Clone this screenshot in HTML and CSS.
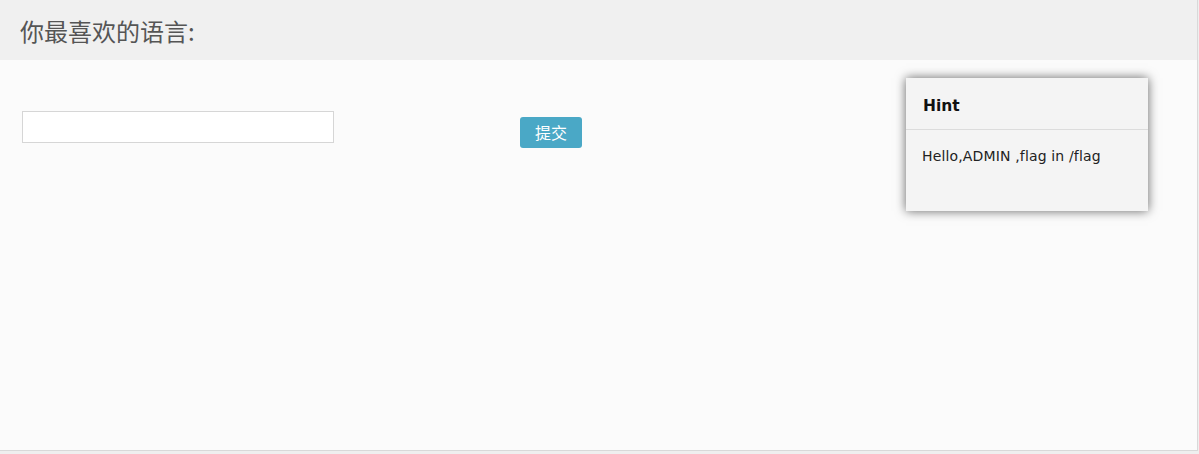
FILE: index.html
```html
<!DOCTYPE html>
<html lang="zh">
<head>
<meta charset="utf-8">
<title>你最喜欢的语言</title>
<link rel="stylesheet" href="styles.css">
</head>
<body>
<div class="page">
  <header class="top">
    <h1 class="title">你最喜欢的语言:</h1>
  </header>
  <main class="main">
    <form class="form">
      <input class="field" type="text">
      <button class="submit" type="button">提交</button>
    </form>
    <aside class="hint">
      <div class="hint-head">Hint</div>
      <div class="hint-body">Hello,ADMIN ,flag in /flag</div>
    </aside>
  </main>
</div>
</body>
</html>
```

FILE: styles.css
```css
html, body {
  margin: 0;
  padding: 0;
}
body {
  background: #efefef;
  font-family: "DejaVu Sans", Verdana, sans-serif;
  height: 454px;
  overflow: hidden;
}
.page {
  width: 1197px;
  height: 450px;
  border-right: 1px solid #d9d9d9;
  border-bottom: 1px solid #d9d9d9;
  background: #fbfbfb;
  display: flex;
  flex-direction: column;
}
.top {
  height: 60px;
  background: #f0f0f0;
  display: flex;
  align-items: center;
  padding-left: 20px;
}
.title {
  margin: 0;
  font-family: "Noto Sans CJK SC", "Microsoft YaHei", sans-serif;
  font-weight: 400;
  font-size: 24px;
  color: #555;
  line-height: 1;
  margin-top: 2px;
}
.main {
  position: relative;
  flex: 1;
}
.form {
  display: flex;
  align-items: flex-start;
  padding-left: 22px;
  margin: 0;
}
.field {
  width: 312px;
  height: 32px;
  box-sizing: border-box;
  margin: 51px 0 0 0;
  border: 1px solid #d6d6d6;
  background: #fff;
  padding: 0 6px;
  outline: none;
}
.submit {
  margin: 57px 0 0 186px;
  width: 62px;
  height: 31px;
  border: none;
  border-radius: 3px;
  background: #4aa8c6;
  color: #fff;
  font-family: "Noto Sans CJK SC", "Microsoft YaHei", sans-serif;
  font-size: 16px;
  padding: 0;
  line-height: 31px;
}
.hint {
  position: absolute;
  left: 906px;
  top: 18px;
  width: 242px;
  height: 133px;
  background: #f4f4f4;
  box-shadow: 0 0 10px rgba(0, 0, 0, 0.6);
  display: flex;
  flex-direction: column;
}
.hint-head {
  height: 52px;
  box-sizing: border-box;
  border-bottom: 1px solid #dcdcdc;
  padding: 19px 0 0 17px;
  font-weight: 700;
  font-size: 15.5px;
  color: #111;
  line-height: 18px;
}
.hint-body {
  padding: 17px 0 0 16px;
  font-size: 14px;
  letter-spacing: 0.15px;
  color: #222;
  line-height: 18px;
}
```
